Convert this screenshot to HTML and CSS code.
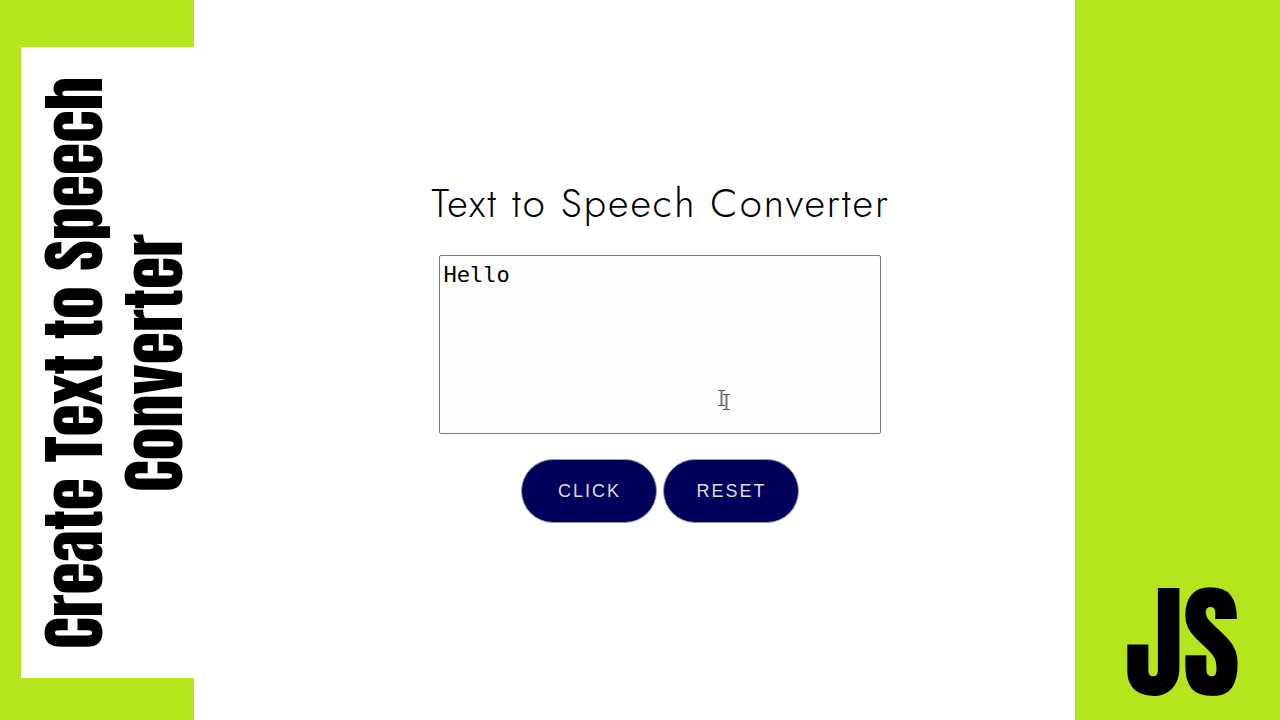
FILE: index.html
```html
<!DOCTYPE html>
<html lang="en">
<head>
<meta charset="utf-8">
<title>Create Text to Speech Converter</title>
<link rel="stylesheet" href="styles.css">
</head>
<body>
<div class="poster">
  <aside class="banner"><h1 class="banner-title">Create Text to Speech<br>Converter</h1></aside>
  <main class="stage">
    <form class="converter">
      <h2 class="heading"><label for="speech">Text to Speech Converter</label></h2>
      <div class="field">
        <textarea class="speech" id="speech" spellcheck="false">Hello</textarea>
        <svg class="cursor" viewBox="0 0 14 22" aria-hidden="true"><path d="M1 1.5h7M1 16.5h7M6 5.500h7M6 20.500h7" stroke="#555" fill="none"/><path d="M4.500 2v14M9.500 6v14" stroke="#777" stroke-width="2" fill="none"/></svg>
      </div>
      <div class="actions">
        <button class="action" type="button">CLICK</button>
        <button class="action" type="reset">RESET</button>
      </div>
    </form>
  </main>
  <aside class="side"><strong class="language">JS</strong></aside>
</div>
</body>
</html>
```
FILE: styles.css
```css
* { box-sizing: border-box; }
body { margin: 0; background: #b5e61d; color: #000; }
.poster { display: grid; grid-template-columns: 194px 1fr 205px; min-height: 100vh; }
.banner { display: flex; align-items: center; justify-content: flex-end; margin: 47px 0 42px 21px; background: #fff; }
.banner-title { margin: 0; writing-mode: vertical-rl; transform: rotate(180deg); text-align: center; font: 400 66px/80px Impact, Anton, "Roboto Condensed", Roboto, sans-serif; white-space: nowrap; }
.stage { display: flex; align-items: center; justify-content: center; background: #fff; padding: 0 0 18px 52px; }
.converter { display: flex; flex-direction: column; align-items: center; }
.heading { margin: 0 0 28px; font: 300 40px/48px Futura, Jost, Lato, sans-serif; letter-spacing: 2px; }
.field { position: relative; display: flex; }
.speech { width: 442px; height: 179px; padding: 3px; border: 1px solid #777; border-radius: 2px; background: #fdfdfb; font: 22px/32px "DejaVu Sans Mono", monospace; resize: none; }
.actions { display: flex; gap: 6px; margin-top: 25px; }
.action { width: 136px; height: 64px; border: 1px solid #99a; border-radius: 32px; background: #00005c; color: #ddd; font: 18px "Liberation Sans", sans-serif; letter-spacing: 2px; }
.cursor { position: absolute; left: 278px; top: 134px; width: 14px; height: 22px; }
.side { display: flex; align-items: flex-end; justify-content: flex-end; padding: 0 40px 12px 0; }
.language { font: 400 124px/130px Impact, Anton, "Roboto Condensed", Roboto, sans-serif; }
```
